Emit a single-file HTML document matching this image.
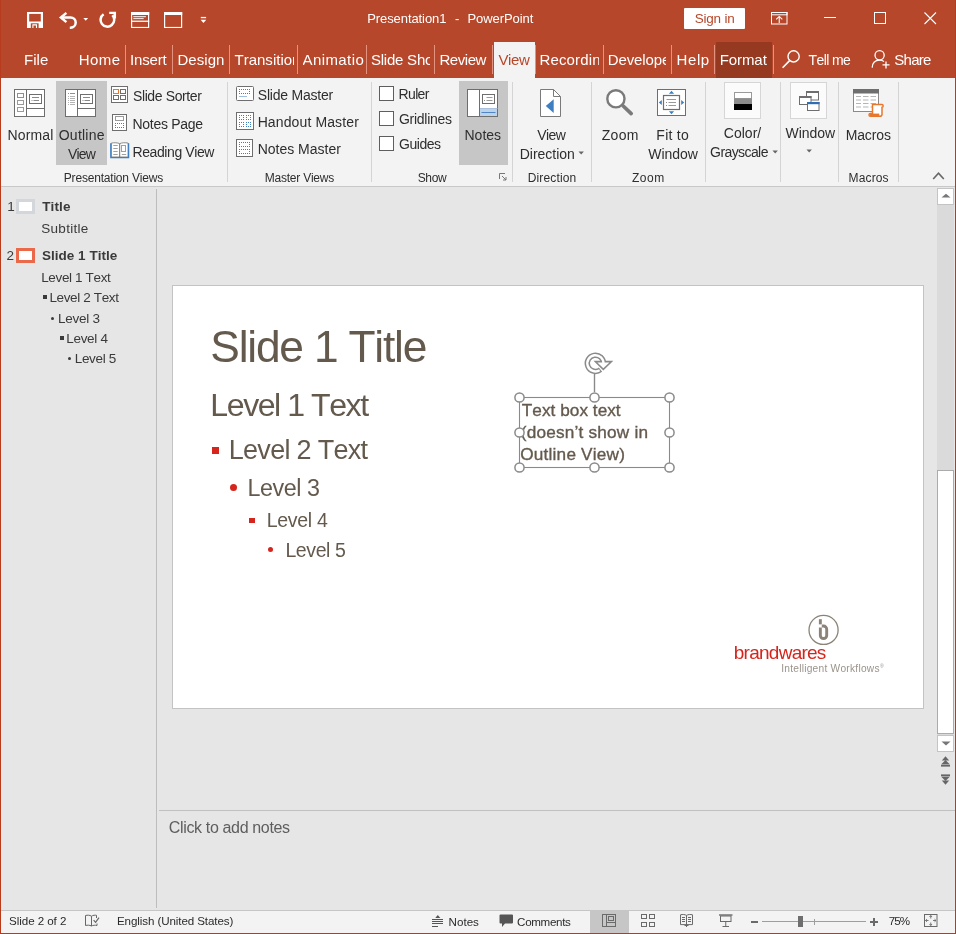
<!DOCTYPE html>
<html><head><meta charset="utf-8"><title>PowerPoint</title>
<style>
html,body{margin:0;padding:0;}
body{width:956px;height:934px;position:relative;overflow:hidden;background:#E6E6E6;font-family:"Liberation Sans",sans-serif;}
.t{position:absolute;white-space:nowrap;font-kerning:none;font-feature-settings:"kern" 0,"liga" 0;font-family:"Liberation Sans",sans-serif;}
.r{position:absolute;display:block;}
#wrap{position:absolute;left:0;top:0;width:956px;height:934px;will-change:transform;}
</style></head><body><div id="wrap">
<div class="r" style="left:0px;top:0px;width:956px;height:78px;background:#B7472A;"></div>
<div class="r" style="left:0px;top:78px;width:956px;height:108px;background:#F3F3F3;"></div>
<div class="r" style="left:0px;top:186px;width:956px;height:1px;background:#C8C8C8;"></div>
<div class="r" style="left:0px;top:187px;width:956px;height:723px;background:#E6E6E6;"></div>
<div class="r" style="left:0px;top:910px;width:956px;height:1px;background:#C6C6C6;"></div>
<div class="r" style="left:0px;top:911px;width:956px;height:23px;background:#F3F3F3;"></div>
<svg class="r" style="left:27px;top:12px;" width="16" height="16" viewBox="0 0 16 16"><rect x="0" y="0" width="16" height="16" fill="#fff"/><rect x="2.2" y="1.9" width="11.6" height="7.6" fill="#B7472A"/><rect x="3.8" y="11.3" width="7.8" height="4.7" fill="#B7472A"/><path d="M5.9 16V12.9H9.5V16" fill="none" stroke="#fff" stroke-width="1.1"/></svg>
<svg class="r" style="left:58px;top:11px;" width="22" height="18" viewBox="0 0 22 18"><path d="M8.4 1.9 L2.9 6.5 L8.4 11.1" fill="none" stroke="#fff" stroke-width="2.5" stroke-linejoin="miter"/><path d="M3.4 6.5 H12.6 A5.1 5.1 0 0 1 12.6 16.7 H11.8" fill="none" stroke="#fff" stroke-width="2.5"/></svg>
<svg class="r" style="left:83px;top:18px;" width="6" height="4" viewBox="0 0 6 4"><path d="M0.3 0h4.8L2.7 2.8z" fill="#fff"/></svg>
<svg class="r" style="left:99px;top:11px;" width="19" height="18" viewBox="0 0 19 18"><path d="M4.6 3.2 A6.8 6.8 0 1 0 13.4 4.2" fill="none" stroke="#fff" stroke-width="2.5"/><path d="M10.2 1.9 H15.9 V7.6" fill="none" stroke="#fff" stroke-width="2.3"/></svg>
<svg class="r" style="left:131px;top:12px;" width="19" height="16" viewBox="0 0 19 16"><rect x="0.6" y="0.6" width="17" height="14.9" fill="none" stroke="#fff" stroke-width="1.2"/><rect x="0" y="0" width="18.2" height="3" fill="#fff"/><rect x="0" y="8.6" width="18.2" height="1.3" fill="#fff"/><rect x="2.3" y="4.2" width="12.6" height="1" fill="#fff"/><rect x="2.3" y="6.2" width="10.4" height="0.9" fill="#fff"/></svg>
<svg class="r" style="left:164px;top:12px;" width="19" height="16" viewBox="0 0 19 16"><rect x="0.6" y="0.6" width="17" height="14.9" fill="none" stroke="#fff" stroke-width="1.2"/><rect x="0" y="0" width="18.2" height="3" fill="#fff"/></svg>
<svg class="r" style="left:200px;top:16px;" width="8" height="8" viewBox="0 0 8 8"><rect x="0.8" y="0.9" width="5.3" height="1.3" fill="#fff"/><path d="M0.6 3.8h5.7L3.45 7.1z" fill="#fff"/></svg>
<div class="t" style="left:367.23px;top:10px;font-size:13px;line-height:17px;letter-spacing:-0.085px;color:#FFFFFF;">Presentation1</div>
<div class="t" style="left:455.02px;top:10px;font-size:13px;line-height:17px;letter-spacing:1.226px;color:#FFFFFF;">-</div>
<div class="t" style="left:467.53px;top:10px;font-size:13px;line-height:17px;letter-spacing:-0.080px;color:#FFFFFF;">PowerPoint</div>
<div class="r" style="left:684px;top:8px;width:61px;height:21px;background:#FFFFFF;border-radius:1px;"></div>
<div class="t" style="left:694.69px;top:10px;font-size:13.5px;line-height:17px;letter-spacing:-0.215px;color:#B7472A;">Sign in</div>
<svg class="r" style="left:771px;top:12px;" width="17" height="13" viewBox="0 0 17 13"><rect x="0.5" y="0.5" width="15.5" height="11.5" fill="none" stroke="#fff" stroke-width="1"/><rect x="0.5" y="0.5" width="15.5" height="2.3" fill="none" stroke="#fff"/><path d="M8.25 4.6v6.4M5.2 7.4l3.05-3 3.05 3" fill="none" stroke="#fff" stroke-width="1.1"/></svg>
<div class="r" style="left:824px;top:17px;width:12px;height:1px;background:#fff;"></div>
<svg class="r" style="left:874px;top:12px;" width="13" height="13" viewBox="0 0 13 13"><rect x="0.5" y="0.5" width="11" height="11" fill="none" stroke="#fff" stroke-width="1"/></svg>
<svg class="r" style="left:924px;top:12px;" width="13" height="13" viewBox="0 0 13 13"><path d="M0.5 0.5l11.5 11.5M12 0.5L0.5 12" fill="none" stroke="#fff" stroke-width="1.1"/></svg>
<div class="r" style="left:125px;top:45px;width:1px;height:29px;background:#E3937F;"></div>
<div class="r" style="left:172px;top:45px;width:1px;height:29px;background:#E3937F;"></div>
<div class="r" style="left:229px;top:45px;width:1px;height:29px;background:#E3937F;"></div>
<div class="r" style="left:297px;top:45px;width:1px;height:29px;background:#E3937F;"></div>
<div class="r" style="left:366px;top:45px;width:1px;height:29px;background:#E3937F;"></div>
<div class="r" style="left:434px;top:45px;width:1px;height:29px;background:#E3937F;"></div>
<div class="r" style="left:603px;top:45px;width:1px;height:29px;background:#E3937F;"></div>
<div class="r" style="left:671px;top:45px;width:1px;height:29px;background:#E3937F;"></div>
<div class="r" style="left:714px;top:45px;width:1px;height:29px;background:#E3937F;"></div>
<div class="r" style="left:773px;top:45px;width:1px;height:29px;background:#E3937F;"></div>
<div class="r" style="left:492px;top:45px;width:1px;height:29px;background:#E3937F;"></div>
<div class="r" style="left:535px;top:45px;width:1px;height:29px;background:#E3937F;"></div>
<div class="r" style="left:494px;top:42px;width:41px;height:36px;background:#F3F3F3;"></div>
<div class="r" style="left:716px;top:42px;width:56px;height:36px;background:#953A21;"></div>
<div class="t" style="left:24.07px;top:50px;font-size:15px;line-height:19px;letter-spacing:0.009px;color:#FFFFFF;">File</div>
<div class="t" style="left:78.77px;top:50px;font-size:15px;line-height:19px;letter-spacing:0.428px;color:#FFFFFF;">Home</div>
<div class="t" style="left:130.12px;top:50px;font-size:15px;line-height:19px;letter-spacing:-0.184px;color:#FFFFFF;">Insert</div>
<div class="t" style="left:177.47px;top:50px;font-size:15px;line-height:19px;letter-spacing:0.043px;color:#FFFFFF;">Design</div>
<div class="t" style="left:234.46px;top:50px;font-size:15px;line-height:19px;letter-spacing:0.017px;color:#FFFFFF;width:59.5px;overflow:hidden;">Transition</div>
<div class="t" style="left:302.57px;top:50px;font-size:15px;line-height:19px;letter-spacing:0.400px;color:#FFFFFF;width:61px;overflow:hidden;">Animation</div>
<div class="t" style="left:370.92px;top:50px;font-size:15px;line-height:19px;letter-spacing:-0.222px;color:#FFFFFF;width:59.5px;overflow:hidden;">Slide Show</div>
<div class="t" style="left:439.47px;top:50px;font-size:15px;line-height:19px;letter-spacing:-0.458px;color:#FFFFFF;">Review</div>
<div class="t" style="left:498.43px;top:50px;font-size:15px;line-height:19px;letter-spacing:-0.361px;color:#B7472A;">View</div>
<div class="t" style="left:539.47px;top:50px;font-size:15px;line-height:19px;letter-spacing:0.141px;color:#FFFFFF;width:59.5px;overflow:hidden;">Recording</div>
<div class="t" style="left:607.77px;top:50px;font-size:15px;line-height:19px;letter-spacing:-0.112px;color:#FFFFFF;width:58.5px;overflow:hidden;">Developer</div>
<div class="t" style="left:676.57px;top:50px;font-size:15px;line-height:19px;letter-spacing:0.570px;color:#FFFFFF;">Help</div>
<div class="t" style="left:719.67px;top:50px;font-size:15px;line-height:19px;letter-spacing:-0.073px;color:#FFFFFF;">Format</div>
<svg class="r" style="left:781px;top:49px;" width="21" height="21" viewBox="0 0 21 21"><circle cx="12.6" cy="7.4" r="5.6" fill="none" stroke="#fff" stroke-width="1.4"/><path d="M8.6 11.6L1.6 18.8" stroke="#fff" stroke-width="1.6" fill="none"/></svg>
<div class="t" style="left:808.49px;top:51px;font-size:14px;line-height:18px;letter-spacing:-0.593px;color:#FFFFFF;">Tell me</div>
<svg class="r" style="left:871px;top:49px;" width="21" height="21" viewBox="0 0 21 21"><circle cx="8.6" cy="6.2" r="4.6" fill="none" stroke="#fff" stroke-width="1.3"/><path d="M1.2 18.6 C1.6 12.6 5 11.2 8.6 11.2 C10.6 11.2 12 11.8 13 12.6" fill="none" stroke="#fff" stroke-width="1.3"/><path d="M15 12.4v7M11.5 15.9h7" stroke="#fff" stroke-width="1.3" fill="none"/></svg>
<div class="t" style="left:894.22px;top:50px;font-size:15px;line-height:19px;letter-spacing:-0.695px;color:#FFFFFF;">Share</div>
<div class="r" style="left:227px;top:82px;width:1px;height:100px;background:#D4D4D4;"></div>
<div class="r" style="left:371px;top:82px;width:1px;height:100px;background:#D4D4D4;"></div>
<div class="r" style="left:512px;top:82px;width:1px;height:100px;background:#D4D4D4;"></div>
<div class="r" style="left:591px;top:82px;width:1px;height:100px;background:#D4D4D4;"></div>
<div class="r" style="left:705px;top:82px;width:1px;height:100px;background:#D4D4D4;"></div>
<div class="r" style="left:780px;top:82px;width:1px;height:100px;background:#D4D4D4;"></div>
<div class="r" style="left:838px;top:82px;width:1px;height:100px;background:#D4D4D4;"></div>
<div class="r" style="left:898px;top:82px;width:1px;height:100px;background:#D4D4D4;"></div>
<div class="r" style="left:56px;top:81px;width:51px;height:84px;background:#C6C6C6;"></div>
<div class="r" style="left:459px;top:81px;width:49px;height:84px;background:#C6C6C6;"></div>
<svg class="r" style="left:14px;top:89px;" width="31" height="28" viewBox="0 0 31 28"><rect x="0.5" y="0.5" width="30" height="27" fill="#fff" stroke="#6E6E6E"/><path d="M12.5 0.5v27M12.5 19.5h18" stroke="#6E6E6E" fill="none"/><rect x="15.5" y="5.5" width="12" height="9" fill="#fff" stroke="#6E6E6E"/><path d="M18 8.5h7M19.5 11.5h5.5" stroke="#8a8a8a" fill="none"/><rect x="17.5" y="11" width="1" height="1" fill="#8a8a8a"/><rect x="3.5" y="4.5" width="6" height="4" fill="#fff" stroke="#E8772E"/><rect x="3.5" y="11.5" width="6" height="4" fill="#fff" stroke="#9a9a9a"/><rect x="3.5" y="18.5" width="6" height="4" fill="#fff" stroke="#9a9a9a"/></svg>
<svg class="r" style="left:65px;top:89px;" width="31" height="28" viewBox="0 0 31 28"><rect x="0.5" y="0.5" width="30" height="27" fill="#fff" stroke="#6E6E6E"/><path d="M12.5 0.5v27M12.5 19.5h18" stroke="#6E6E6E" fill="none"/><rect x="15.5" y="5.5" width="12" height="9" fill="#fff" stroke="#6E6E6E"/><path d="M18 8.5h7M19.5 11.5h5.5" stroke="#8a8a8a" fill="none"/><rect x="17.5" y="11" width="1" height="1" fill="#8a8a8a"/><rect x="3" y="4" width="1" height="1" fill="#E8772E"/><rect x="5" y="4" width="5" height="1" fill="#E8772E"/><rect x="3" y="7" width="1" height="1" fill="#b4b4b4"/><rect x="5" y="7" width="5" height="1" fill="#b4b4b4"/><rect x="3" y="9" width="1" height="1" fill="#b4b4b4"/><rect x="5" y="9" width="5" height="1" fill="#b4b4b4"/><rect x="3" y="11" width="1" height="1" fill="#b4b4b4"/><rect x="5" y="11" width="5" height="1" fill="#b4b4b4"/><rect x="3" y="13" width="1" height="1" fill="#b4b4b4"/><rect x="5" y="13" width="5" height="1" fill="#b4b4b4"/><rect x="3" y="15" width="1" height="1" fill="#b4b4b4"/><rect x="5" y="15" width="5" height="1" fill="#b4b4b4"/></svg>
<div class="t" style="left:7.55px;top:126px;font-size:14px;line-height:18px;letter-spacing:0.134px;color:#2E2E2E;">Normal</div>
<div class="t" style="left:58.74px;top:126px;font-size:14px;line-height:18px;letter-spacing:0.238px;color:#2E2E2E;">Outline</div>
<div class="t" style="left:67.94px;top:145px;font-size:14px;line-height:18px;letter-spacing:-0.806px;color:#2E2E2E;">View</div>
<svg class="r" style="left:111px;top:86px;" width="17" height="17" viewBox="0 0 17 17"><rect x="0.5" y="0.5" width="16" height="16" fill="#fff" stroke="#6E6E6E"/><rect x="2.5" y="3.5" width="5" height="4" fill="#fff" stroke="#E8772E"/><rect x="9.5" y="3.5" width="5" height="4" fill="#fff" stroke="#6E6E6E"/><rect x="2.5" y="9.5" width="5" height="4" fill="#fff" stroke="#6E6E6E"/><rect x="9.5" y="9.5" width="5" height="4" fill="#fff" stroke="#6E6E6E"/></svg>
<svg class="r" style="left:112px;top:114px;" width="15" height="17" viewBox="0 0 15 17"><rect x="0.5" y="0.5" width="14" height="16" fill="#fff" stroke="#6E6E6E"/><rect x="3.5" y="2.5" width="8" height="4" fill="#fff" stroke="#9a9a9a"/><rect x="3" y="9" width="1" height="1" fill="#3F7FC1"/><rect x="3" y="11" width="1" height="1" fill="#3F7FC1"/><rect x="3" y="13" width="1" height="1" fill="#3F7FC1"/><rect x="5" y="9" width="1" height="1" fill="#3F7FC1"/><rect x="5" y="13" width="1" height="1" fill="#3F7FC1"/><rect x="7" y="9" width="1" height="1" fill="#3F7FC1"/><rect x="7" y="13" width="1" height="1" fill="#3F7FC1"/><rect x="9" y="9" width="1" height="1" fill="#3F7FC1"/><rect x="9" y="13" width="1" height="1" fill="#3F7FC1"/><rect x="11" y="9" width="1" height="1" fill="#3F7FC1"/><rect x="11" y="11" width="1" height="1" fill="#3F7FC1"/><rect x="11" y="13" width="1" height="1" fill="#3F7FC1"/></svg>
<svg class="r" style="left:110px;top:142px;" width="20" height="17" viewBox="0 0 20 17"><path d="M1.3 1.1 C4 0.5 7.8 0.6 9.7 1.7 C11.6 0.6 15.4 0.5 18.1 1.1 V15 H1.3z" fill="#fff" stroke="#8a8a8a"/><path d="M0.8 1.2V15.7H18.6V1.2" fill="none" stroke="#3F7FC1" stroke-width="1.3"/><path d="M9.7 1.7v13.6" stroke="#6E6E6E" fill="none"/><path d="M3.3 3.5h4.4M3.3 6.5h4.4M3.3 9.5h4.4M3.3 12.5h4.4M11.8 12.5h4.4" stroke="#a0a0a0" fill="none"/><rect x="11.5" y="3.5" width="4" height="6" fill="#fff" stroke="#a0a0a0"/></svg>
<div class="t" style="left:132.96px;top:87px;font-size:14px;line-height:18px;letter-spacing:-0.380px;color:#2E2E2E;">Slide Sorter</div>
<div class="t" style="left:132.45px;top:115px;font-size:14px;line-height:18px;letter-spacing:-0.276px;color:#2E2E2E;">Notes Page</div>
<div class="t" style="left:132.45px;top:143px;font-size:14px;line-height:18px;letter-spacing:-0.397px;color:#2E2E2E;">Reading View</div>
<div class="t" style="left:63.82px;top:170px;font-size:12px;line-height:16px;letter-spacing:-0.200px;color:#2E2E2E;">Presentation Views</div>
<svg class="r" style="left:236px;top:86px;" width="18" height="15" viewBox="0 0 18 15"><rect x="0.5" y="0.5" width="17" height="14" rx="1" fill="#fff" stroke="#6E6E6E"/><rect x="3" y="3" width="1" height="1" fill="#3F7FC1"/><rect x="3" y="5" width="1" height="1" fill="#3F7FC1"/><rect x="3" y="7" width="1" height="1" fill="#3F7FC1"/><rect x="5" y="3" width="1" height="1" fill="#3F7FC1"/><rect x="5" y="7" width="1" height="1" fill="#3F7FC1"/><rect x="7" y="3" width="1" height="1" fill="#3F7FC1"/><rect x="7" y="7" width="1" height="1" fill="#3F7FC1"/><rect x="9" y="3" width="1" height="1" fill="#3F7FC1"/><rect x="9" y="7" width="1" height="1" fill="#3F7FC1"/><rect x="11" y="3" width="1" height="1" fill="#3F7FC1"/><rect x="11" y="7" width="1" height="1" fill="#3F7FC1"/><rect x="13" y="3" width="1" height="1" fill="#3F7FC1"/><rect x="13" y="5" width="1" height="1" fill="#3F7FC1"/><rect x="13" y="7" width="1" height="1" fill="#3F7FC1"/><rect x="3" y="10" width="8" height="1" fill="#9DBCE0"/></svg>
<svg class="r" style="left:236px;top:112px;" width="18" height="18" viewBox="0 0 18 18"><rect x="0.5" y="0.5" width="17" height="17" fill="#fff" stroke="#6E6E6E"/><rect x="3" y="3" width="1" height="1" fill="#3F7FC1"/><rect x="3" y="5" width="1" height="1" fill="#3F7FC1"/><rect x="3" y="7" width="1" height="1" fill="#3F7FC1"/><rect x="5" y="3" width="1" height="1" fill="#3F7FC1"/><rect x="5" y="7" width="1" height="1" fill="#3F7FC1"/><rect x="7" y="3" width="1" height="1" fill="#3F7FC1"/><rect x="7" y="5" width="1" height="1" fill="#3F7FC1"/><rect x="7" y="7" width="1" height="1" fill="#3F7FC1"/><rect x="10" y="3" width="1" height="1" fill="#3F7FC1"/><rect x="10" y="5" width="1" height="1" fill="#3F7FC1"/><rect x="10" y="7" width="1" height="1" fill="#3F7FC1"/><rect x="12" y="3" width="1" height="1" fill="#3F7FC1"/><rect x="12" y="7" width="1" height="1" fill="#3F7FC1"/><rect x="14" y="3" width="1" height="1" fill="#3F7FC1"/><rect x="14" y="5" width="1" height="1" fill="#3F7FC1"/><rect x="14" y="7" width="1" height="1" fill="#3F7FC1"/><rect x="3" y="10" width="1" height="1" fill="#3F7FC1"/><rect x="3" y="12" width="1" height="1" fill="#3F7FC1"/><rect x="3" y="14" width="1" height="1" fill="#3F7FC1"/><rect x="5" y="10" width="1" height="1" fill="#3F7FC1"/><rect x="5" y="14" width="1" height="1" fill="#3F7FC1"/><rect x="7" y="10" width="1" height="1" fill="#3F7FC1"/><rect x="7" y="12" width="1" height="1" fill="#3F7FC1"/><rect x="7" y="14" width="1" height="1" fill="#3F7FC1"/><rect x="10" y="10" width="1" height="1" fill="#3F7FC1"/><rect x="10" y="12" width="1" height="1" fill="#3F7FC1"/><rect x="10" y="14" width="1" height="1" fill="#3F7FC1"/><rect x="12" y="10" width="1" height="1" fill="#3F7FC1"/><rect x="12" y="14" width="1" height="1" fill="#3F7FC1"/><rect x="14" y="10" width="1" height="1" fill="#3F7FC1"/><rect x="14" y="12" width="1" height="1" fill="#3F7FC1"/><rect x="14" y="14" width="1" height="1" fill="#3F7FC1"/></svg>
<svg class="r" style="left:236px;top:139px;" width="17" height="18" viewBox="0 0 17 18"><rect x="0.5" y="0.5" width="16" height="17" fill="#fff" stroke="#6E6E6E"/><rect x="3" y="3" width="1" height="1" fill="#3F7FC1"/><rect x="3" y="5" width="1" height="1" fill="#3F7FC1"/><rect x="3" y="7" width="1" height="1" fill="#3F7FC1"/><rect x="5" y="3" width="1" height="1" fill="#3F7FC1"/><rect x="5" y="7" width="1" height="1" fill="#3F7FC1"/><rect x="7" y="3" width="1" height="1" fill="#3F7FC1"/><rect x="7" y="7" width="1" height="1" fill="#3F7FC1"/><rect x="9" y="3" width="1" height="1" fill="#3F7FC1"/><rect x="9" y="7" width="1" height="1" fill="#3F7FC1"/><rect x="11" y="3" width="1" height="1" fill="#3F7FC1"/><rect x="11" y="7" width="1" height="1" fill="#3F7FC1"/><rect x="13" y="3" width="1" height="1" fill="#3F7FC1"/><rect x="13" y="5" width="1" height="1" fill="#3F7FC1"/><rect x="13" y="7" width="1" height="1" fill="#3F7FC1"/><rect x="3" y="10" width="1" height="1" fill="#3F7FC1"/><rect x="3" y="12" width="1" height="1" fill="#3F7FC1"/><rect x="3" y="14" width="1" height="1" fill="#3F7FC1"/><rect x="5" y="10" width="1" height="1" fill="#3F7FC1"/><rect x="5" y="14" width="1" height="1" fill="#3F7FC1"/><rect x="7" y="10" width="1" height="1" fill="#3F7FC1"/><rect x="7" y="14" width="1" height="1" fill="#3F7FC1"/><rect x="9" y="10" width="1" height="1" fill="#3F7FC1"/><rect x="9" y="14" width="1" height="1" fill="#3F7FC1"/><rect x="11" y="10" width="1" height="1" fill="#3F7FC1"/><rect x="11" y="14" width="1" height="1" fill="#3F7FC1"/><rect x="13" y="10" width="1" height="1" fill="#3F7FC1"/><rect x="13" y="12" width="1" height="1" fill="#3F7FC1"/><rect x="13" y="14" width="1" height="1" fill="#3F7FC1"/></svg>
<div class="t" style="left:257.86px;top:86px;font-size:14px;line-height:18px;letter-spacing:-0.231px;color:#2E2E2E;">Slide Master</div>
<div class="t" style="left:257.65px;top:113px;font-size:14px;line-height:18px;letter-spacing:0.121px;color:#2E2E2E;">Handout Master</div>
<div class="t" style="left:257.65px;top:140px;font-size:14px;line-height:18px;letter-spacing:0.003px;color:#2E2E2E;">Notes Master</div>
<div class="t" style="left:264.72px;top:170px;font-size:12px;line-height:16px;letter-spacing:-0.227px;color:#2E2E2E;">Master Views</div>
<div class="r" style="left:379px;top:86px;width:13px;height:13px;background:#fff;border:1px solid #5E5E5E;"></div>
<div class="r" style="left:379px;top:111px;width:13px;height:13px;background:#fff;border:1px solid #5E5E5E;"></div>
<div class="r" style="left:379px;top:136px;width:13px;height:13px;background:#fff;border:1px solid #5E5E5E;"></div>
<div class="t" style="left:398.55px;top:85px;font-size:14px;line-height:18px;letter-spacing:-0.644px;color:#2E2E2E;">Ruler</div>
<div class="t" style="left:399.00px;top:110px;font-size:14px;line-height:18px;letter-spacing:-0.279px;color:#2E2E2E;">Gridlines</div>
<div class="t" style="left:399.00px;top:135px;font-size:14px;line-height:18px;letter-spacing:-0.470px;color:#2E2E2E;">Guides</div>
<svg class="r" style="left:467px;top:89px;" width="32" height="28" viewBox="0 0 32 28"><rect x="0.5" y="0.5" width="30" height="27" fill="#fff"/><rect x="13" y="19.5" width="17.5" height="8" fill="#BDD3EC"/><path d="M14.5 23.5h14" stroke="#4F86C6" fill="none"/><rect x="0.5" y="0.5" width="30" height="27" fill="none" stroke="#6E6E6E"/><path d="M12.5 0.5v27" stroke="#6E6E6E" fill="none"/><path d="M13 19.5h17.5" stroke="#A9C1DD" fill="none"/><rect x="15.5" y="5.5" width="12" height="9" fill="#fff" stroke="#6E6E6E"/><path d="M19.5 8.5h6M19.5 11.5h6" stroke="#9a9a9a" fill="none"/><rect x="17" y="11" width="1" height="1" fill="#8a8a8a"/></svg>
<div class="t" style="left:464.45px;top:126px;font-size:14px;line-height:18px;letter-spacing:0.021px;color:#2E2E2E;">Notes</div>
<div class="t" style="left:417.66px;top:170px;font-size:12px;line-height:16px;letter-spacing:-0.301px;color:#2E2E2E;">Show</div>
<svg class="r" style="left:499px;top:173px;" width="8" height="8" viewBox="0 0 8 8"><path d="M0.5 6V0.5H6" fill="none" stroke="#777"/><path d="M3 3l4 4M7 4v3H4" fill="none" stroke="#777"/></svg>
<svg class="r" style="left:540px;top:89px;" width="22" height="29" viewBox="0 0 22 29"><path d="M0.5 0.5H13.5L20.5 7.5V27.5H0.5z" fill="#fff" stroke="#7a7a7a"/><path d="M13.5 0.5V7.5H20.5" fill="none" stroke="#7a7a7a"/><path d="M13.7 10.3V24L5.8 17.1z" fill="#3F7FC1"/></svg>
<div class="t" style="left:537.34px;top:126px;font-size:14px;line-height:18px;letter-spacing:-0.639px;color:#2E2E2E;">View</div>
<div class="t" style="left:519.75px;top:145px;font-size:14px;line-height:18px;letter-spacing:-0.023px;color:#2E2E2E;">Direction</div>
<svg class="r" style="left:578px;top:151px;" width="7" height="4" viewBox="0 0 7 4"><path d="M0.5 0.5h5.4L3.2 3.4z" fill="#666"/></svg>
<div class="t" style="left:527.72px;top:170px;font-size:12px;line-height:16px;letter-spacing:0.152px;color:#2E2E2E;">Direction</div>
<svg class="r" style="left:605px;top:88px;" width="30" height="30" viewBox="0 0 30 30"><circle cx="10.9" cy="10.8" r="8.6" fill="#fff" stroke="#7a7a7a" stroke-width="2.4"/><path d="M18.2 18L26.2 25.6" stroke="#7a7a7a" stroke-width="3.7" stroke-linecap="round" fill="none"/></svg>
<div class="t" style="left:601.76px;top:126px;font-size:14px;line-height:18px;letter-spacing:0.294px;color:#2E2E2E;">Zoom</div>
<svg class="r" style="left:657px;top:89px;" width="30" height="28" viewBox="0 0 30 28"><rect x="0.5" y="0.5" width="28" height="26" fill="#fff" stroke="#6E6E6E"/><rect x="6.5" y="6.5" width="16" height="14" fill="#fff" stroke="#6E6E6E" stroke-width="1.2"/><path d="M9.5 10.5h9.5M11.5 13.5h7.5M11.5 16.5h7.5" stroke="#999" fill="none"/><rect x="9" y="13" width="1" height="1" fill="#888"/><rect x="9" y="16" width="1" height="1" fill="#888"/><path d="M14.5 1.8l2.6 3h-5.2zM14.5 25.2l2.6-3h-5.2zM1.8 13.5l3-2.6v5.2zM27.2 13.5l-3-2.6v5.2z" fill="#3F7FC1"/></svg>
<div class="t" style="left:656.35px;top:126px;font-size:14px;line-height:18px;letter-spacing:0.264px;color:#2E2E2E;">Fit to</div>
<div class="t" style="left:648.34px;top:145px;font-size:14px;line-height:18px;letter-spacing:-0.053px;color:#2E2E2E;">Window</div>
<div class="t" style="left:631.92px;top:170px;font-size:12px;line-height:16px;letter-spacing:0.533px;color:#2E2E2E;">Zoom</div>
<div class="r" style="left:724px;top:82px;width:35px;height:35px;background:#FBFBFB;border:1px solid #D6D6D6;"></div>
<svg class="r" style="left:734px;top:92px;" width="18" height="18" viewBox="0 0 18 18"><rect x="0.5" y="0.5" width="17" height="6" fill="#fff" stroke="#9a9a9a"/><rect x="0" y="6.5" width="18" height="5.5" fill="#8C8C8C"/><rect x="0" y="12" width="18" height="6" fill="#000"/></svg>
<div class="t" style="left:723.79px;top:124px;font-size:14px;line-height:18px;letter-spacing:0.013px;color:#2E2E2E;">Color/</div>
<div class="t" style="left:710.10px;top:143px;font-size:14px;line-height:18px;letter-spacing:-0.587px;color:#2E2E2E;">Grayscale</div>
<svg class="r" style="left:772px;top:150px;" width="7" height="4" viewBox="0 0 7 4"><path d="M0.5 0.5h5.4L3.2 3.4z" fill="#666"/></svg>
<div class="r" style="left:790px;top:82px;width:35px;height:35px;background:#FBFBFB;border:1px solid #D6D6D6;"></div>
<svg class="r" style="left:798px;top:91px;" width="23" height="21" viewBox="0 0 23 21"><rect x="8.5" y="0.5" width="12" height="8.5" fill="#fff" stroke="#6E6E6E"/><rect x="8" y="0" width="13" height="2" fill="#6E6E6E"/><rect x="1.5" y="5.5" width="11.5" height="8" fill="#fff" stroke="#6E6E6E"/><rect x="1" y="5" width="12.5" height="2" fill="#6E6E6E"/><rect x="9.5" y="11.5" width="11.5" height="8" fill="#fff" stroke="#6E6E6E"/><rect x="9" y="11" width="12.5" height="2.2" fill="#2F6DB5"/></svg>
<div class="t" style="left:785.54px;top:124px;font-size:14px;line-height:18px;letter-spacing:-0.053px;color:#2E2E2E;">Window</div>
<svg class="r" style="left:806px;top:149px;" width="7" height="4" viewBox="0 0 7 4"><path d="M0.5 0.5h5.4L3.2 3.4z" fill="#666"/></svg>
<svg class="r" style="left:853px;top:89px;" width="32" height="29" viewBox="0 0 32 29"><rect x="0.5" y="0.5" width="25" height="22" fill="#fff" stroke="#8a8a8a"/><rect x="0" y="0" width="26" height="4.5" fill="#6E6E6E"/><path d="M3 7.5h5M10 7.5h5.5M17.5 7.5h5.5" stroke="#b5b5b5" fill="none"/><path d="M3 11h5M10 11h5.5M17.5 11h5.5" stroke="#b5b5b5" fill="none"/><path d="M3 14.5h5M10 14.5h5.5M17.5 14.5h5.5" stroke="#b5b5b5" fill="none"/><path d="M3 18h5M10 18h5.5M17.5 18h5.5" stroke="#b5b5b5" fill="none"/><path d="M19.5 15.5H29 C30.5 15.5 30.5 18.3 29 18.3 V25.5 C29 27 27.5 27.3 26.5 27.3 H17.3 C15.6 27.3 15.6 24.6 17.3 24.6 H19.5z" fill="#fff" stroke="#E8772E" stroke-width="1.5"/><path d="M16.8 25.9h9.5" stroke="#E8772E" stroke-width="2.6" fill="none"/></svg>
<div class="t" style="left:845.65px;top:126px;font-size:14px;line-height:18px;letter-spacing:-0.128px;color:#2E2E2E;">Macros</div>
<div class="t" style="left:848.62px;top:170px;font-size:12px;line-height:16px;letter-spacing:0.116px;color:#2E2E2E;">Macros</div>
<svg class="r" style="left:932px;top:171px;" width="13" height="9" viewBox="0 0 13 9"><path d="M1.2 8L6.5 2.2L11.8 8" fill="none" stroke="#666" stroke-width="1.6"/></svg>
<div class="r" style="left:156px;top:189px;width:1px;height:719px;background:#BDBDBD;"></div>
<div class="t" style="left:7.27px;top:198px;font-size:13.5px;line-height:17px;letter-spacing:-1.621px;color:#3A3A3A;">1</div>
<div class="t" style="left:6.62px;top:247px;font-size:13.5px;line-height:17px;letter-spacing:-0.350px;color:#3A3A3A;">2</div>
<div class="r" style="left:16px;top:199px;width:19px;height:15px;background:#fff;box-sizing:border-box;border:3px solid #D3D7DB;"></div>
<div class="r" style="left:16px;top:248px;width:19px;height:15px;background:#fff;box-sizing:border-box;border:3px solid #E9694A;"></div>
<div class="t" style="left:42.15px;top:198px;font-size:13.5px;line-height:17px;letter-spacing:0.140px;color:#3A3A3A;font-weight:bold;">Title</div>
<div class="t" style="left:41.29px;top:220px;font-size:13.5px;line-height:17px;letter-spacing:0.283px;color:#3A3A3A;">Subtitle</div>
<div class="t" style="left:41.91px;top:247px;font-size:13.5px;line-height:17px;letter-spacing:0.027px;color:#3A3A3A;font-weight:bold;">Slide 1 Title</div>
<div class="t" style="left:41.19px;top:269px;font-size:13.5px;line-height:17px;letter-spacing:-0.357px;color:#3A3A3A;">Level 1 Text</div>
<div class="r" style="left:43px;top:295px;width:4px;height:4px;background:#3A3A3A;"></div>
<div class="t" style="left:49.49px;top:289px;font-size:13.5px;line-height:17px;letter-spacing:-0.376px;color:#3A3A3A;">Level 2 Text</div>
<div class="r" style="left:51px;top:317px;width:3px;height:3px;background:#3A3A3A;border-radius:1.5px;"></div>
<div class="t" style="left:58.09px;top:310px;font-size:13.5px;line-height:17px;letter-spacing:-0.255px;color:#3A3A3A;">Level 3</div>
<div class="r" style="left:60px;top:336px;width:4px;height:4px;background:#3A3A3A;"></div>
<div class="t" style="left:66.19px;top:330px;font-size:13.5px;line-height:17px;letter-spacing:-0.288px;color:#3A3A3A;">Level 4</div>
<div class="r" style="left:67.5px;top:357px;width:3px;height:3px;background:#3A3A3A;border-radius:1.5px;"></div>
<div class="t" style="left:74.69px;top:350px;font-size:13.5px;line-height:17px;letter-spacing:-0.310px;color:#3A3A3A;">Level 5</div>
<div class="r" style="left:172px;top:285px;width:752px;height:424px;background:#FFFFFF;box-sizing:border-box;border:1px solid #C3C3C3;"></div>
<div class="t" style="left:210.29px;top:321px;font-size:44.3px;line-height:51px;letter-spacing:-1.198px;color:#63594D;">Slide 1 Title</div>
<div class="t" style="left:210.37px;top:386px;font-size:32.1px;line-height:38px;letter-spacing:-1.454px;color:#63594D;">Level 1 Text</div>
<div class="r" style="left:212.4px;top:447.2px;width:7.1px;height:7.1px;background:#D5251C;"></div>
<div class="t" style="left:228.69px;top:434px;font-size:27px;line-height:32px;letter-spacing:-0.697px;color:#63594D;">Level 2 Text</div>
<div class="r" style="left:229.9px;top:483.5px;width:7.2px;height:7.2px;background:#D5251C;border-radius:50%;"></div>
<div class="t" style="left:247.39px;top:474px;font-size:23.3px;line-height:28px;letter-spacing:-0.416px;color:#63594D;">Level 3</div>
<div class="r" style="left:249.4px;top:517.8px;width:5.5px;height:5.5px;background:#D5251C;"></div>
<div class="t" style="left:266.80px;top:508px;font-size:19.5px;line-height:24px;letter-spacing:-0.318px;color:#63594D;">Level 4</div>
<div class="r" style="left:267.8px;top:546.7px;width:5.4px;height:5.4px;background:#D5251C;border-radius:50%;"></div>
<div class="t" style="left:285.40px;top:538px;font-size:19.5px;line-height:24px;letter-spacing:-0.394px;color:#63594D;">Level 5</div>
<div class="t" style="left:521.81px;top:399px;font-size:17.2px;line-height:22px;letter-spacing:0.037px;color:#63594D;-webkit-text-stroke:0.35px #63594D;">Text box text</div>
<div class="t" style="left:520.83px;top:421px;font-size:17.2px;line-height:22px;letter-spacing:0.200px;color:#63594D;-webkit-text-stroke:0.35px #63594D;">(doesn’t show in</div>
<div class="t" style="left:520.29px;top:443px;font-size:17.2px;line-height:22px;letter-spacing:0.200px;color:#63594D;-webkit-text-stroke:0.35px #63594D;">Outline View)</div>
<svg class="r" style="left:504px;top:344px;" width="182" height="130" viewBox="0 0 182 130"><path d="M90.5 30v18" stroke="#8A8A8A" stroke-width="1.4" fill="none"/><rect x="15.5" y="53.5" width="150" height="70" fill="none" stroke="#8A8A8A" stroke-width="1.1"/><circle cx="15.5" cy="53.5" r="4.6" fill="#fff" stroke="#8A8A8A" stroke-width="1.5"/><circle cx="15.5" cy="88.5" r="4.6" fill="#fff" stroke="#8A8A8A" stroke-width="1.5"/><circle cx="15.5" cy="123.5" r="4.6" fill="#fff" stroke="#8A8A8A" stroke-width="1.5"/><circle cx="90.5" cy="53.5" r="4.6" fill="#fff" stroke="#8A8A8A" stroke-width="1.5"/><circle cx="90.5" cy="123.5" r="4.6" fill="#fff" stroke="#8A8A8A" stroke-width="1.5"/><circle cx="165.5" cy="53.5" r="4.6" fill="#fff" stroke="#8A8A8A" stroke-width="1.5"/><circle cx="165.5" cy="88.5" r="4.6" fill="#fff" stroke="#8A8A8A" stroke-width="1.5"/><circle cx="165.5" cy="123.5" r="4.6" fill="#fff" stroke="#8A8A8A" stroke-width="1.5"/><path d="M99.47 20.0 A8.1 8.1 0 1 0 96.5 25.6" fill="none" stroke="#8A8A8A" stroke-width="5.4"/><path d="M91.5 17.6H107.3L99.3 25.4z" fill="#8A8A8A" stroke="#8A8A8A" stroke-width="1.7" stroke-linejoin="miter"/><path d="M99.47 20.0 A8.1 8.1 0 1 0 95.69 26.17" fill="none" stroke="#fff" stroke-width="2.4"/><path d="M93.4 18.4H105.4L99.3 24.3z" fill="#fff"/></svg>
<svg class="r" style="left:807px;top:613px;" width="34" height="34" viewBox="0 0 34 34"><circle cx="16.56" cy="16.9" r="14.55" fill="#fff" stroke="#8B8378" stroke-width="1.3"/><rect x="11.9" y="6.2" width="2.9" height="5.15" fill="#8B8378"/><path d="M13.35 14.6V22.4A3.17 3.17 0 0 0 19.7 22.4V16.2A3.17 3.17 0 0 0 16.5 13.05H14.8" fill="none" stroke="#8B8378" stroke-width="2.9"/></svg>
<div class="t" style="left:733.78px;top:641px;font-size:19px;line-height:23px;letter-spacing:-0.741px;color:#D5251C;">brandwares</div>
<div class="t" style="left:781.16px;top:662px;font-size:10.2px;line-height:13px;letter-spacing:0.249px;color:#9A938B;">Intelligent Workflows</div>
<div class="t" style="left:879.92px;top:662px;font-size:5px;line-height:8px;letter-spacing:0.470px;color:#9A938B;">®</div>
<div class="r" style="left:937px;top:188px;width:17px;height:564px;background:#DADADA;"></div>
<div class="r" style="left:937px;top:188px;width:17px;height:17px;background:#fff;box-sizing:border-box;border:1px solid #C4C4C4;"></div>
<svg class="r" style="left:941px;top:193px;" width="10" height="5" viewBox="0 0 10 5"><path d="M0.5 4.6h9L5 0.8z" fill="#777"/></svg>
<div class="r" style="left:937px;top:470px;width:17px;height:264px;background:#fff;box-sizing:border-box;border:1px solid #ABABAB;"></div>
<div class="r" style="left:937px;top:735px;width:17px;height:17px;background:#fff;box-sizing:border-box;border:1px solid #C4C4C4;"></div>
<svg class="r" style="left:941px;top:741px;" width="10" height="5" viewBox="0 0 10 5"><path d="M0.5 0.4h9L5 4.4z" fill="#777"/></svg>
<svg class="r" style="left:940px;top:756px;" width="11" height="11" viewBox="0 0 11 11"><path d="M5.5 0.3L9.2 4.4H1.8z" fill="#666"/><path d="M5.5 4L10 8.6H1z" fill="#666"/><rect x="1" y="9" width="9" height="1.6" fill="#666"/></svg>
<svg class="r" style="left:940px;top:774px;" width="11" height="11" viewBox="0 0 11 11"><rect x="1" y="0.4" width="9" height="1.6" fill="#666"/><path d="M1 2.4H10L5.5 7z" fill="#666"/><path d="M1.8 6.6H9.2L5.5 10.7z" fill="#666"/></svg>
<div class="r" style="left:159px;top:810px;width:796px;height:1px;background:#C0C0C0;"></div>
<div class="t" style="left:168.79px;top:818px;font-size:16px;line-height:19px;letter-spacing:-0.346px;color:#5E5E5E;">Click to add notes</div>
<div class="t" style="left:9.07px;top:914px;font-size:11.6px;line-height:14px;letter-spacing:-0.066px;color:#2B2B2B;">Slide 2 of 2</div>
<svg class="r" style="left:85px;top:914px;" width="15" height="14" viewBox="0 0 15 14"><path d="M0.5 1.5C2.5 1 4.5 1 6.5 2.2V12C4.5 11 2.5 11 0.5 11.5zM6.5 2.2C8 1.2 10 1 11.5 1.3V4" fill="none" stroke="#666"/><path d="M6.5 12C8 11.2 10 11 12 11.5V9.5" fill="none" stroke="#666"/><path d="M8.6 6.2l2 2.2L14 3.6" fill="none" stroke="#666" stroke-width="1.2"/></svg>
<div class="t" style="left:116.95px;top:914px;font-size:11.6px;line-height:14px;letter-spacing:-0.098px;color:#2B2B2B;">English (United States)</div>
<svg class="r" style="left:431px;top:914px;" width="13" height="14" viewBox="0 0 13 14"><path d="M6.8 1L9.3 4H4.3z" fill="#555"/><path d="M1 5.5h11M1 7.5h11M1 9.5h11M1 12.5h6" stroke="#555" fill="none"/></svg>
<div class="t" style="left:448.55px;top:915px;font-size:11.6px;line-height:14px;letter-spacing:0.017px;color:#2B2B2B;">Notes</div>
<svg class="r" style="left:499px;top:914px;" width="15" height="14" viewBox="0 0 15 14"><path d="M1.5 0.5H13A1 1 0 0 1 14 1.5V8.5A1 1 0 0 1 13 9.5H6L3 13V9.5H1.5A1 1 0 0 1 0.5 8.5V1.5A1 1 0 0 1 1.5 0.5z" fill="#555"/></svg>
<div class="t" style="left:517.11px;top:915px;font-size:11.6px;line-height:14px;letter-spacing:-0.325px;color:#2B2B2B;">Comments</div>
<div class="r" style="left:590px;top:911px;width:39px;height:22px;background:#C6C6C6;"></div>
<svg class="r" style="left:602px;top:914px;" width="14" height="13" viewBox="0 0 14 13"><rect x="0.5" y="0.5" width="13" height="12" fill="none" stroke="#6A6A6A"/><path d="M4.5 0.5v12M4.5 8.5h9" stroke="#6A6A6A" fill="none"/><rect x="6.5" y="2.5" width="5" height="4" fill="none" stroke="#6A6A6A"/></svg>
<svg class="r" style="left:641px;top:914px;" width="15" height="13" viewBox="0 0 15 13"><rect x="0.5" y="0.5" width="5" height="4" fill="none" stroke="#6A6A6A"/><rect x="8.5" y="0.5" width="5" height="4" fill="none" stroke="#6A6A6A"/><rect x="0.5" y="8.5" width="5" height="4" fill="none" stroke="#6A6A6A"/><rect x="8.5" y="8.5" width="5" height="4" fill="none" stroke="#6A6A6A"/></svg>
<svg class="r" style="left:680px;top:914px;" width="14" height="14" viewBox="0 0 14 14"><path d="M0.5 0.8C2.5 0.2 5 0.4 6.5 1.4C8 0.4 10.5 0.2 12.5 0.8V10.6H0.5z" fill="none" stroke="#6A6A6A"/><path d="M6.5 1.4V13" stroke="#6A6A6A" fill="none"/><path d="M2 3.5h3M2 5.5h3M2 7.5h3M8 3.5h3M8 5.5h3M8 7.5h3" stroke="#6A6A6A" fill="none"/><path d="M4.5 11.5h4" stroke="#6A6A6A" fill="none"/></svg>
<svg class="r" style="left:719px;top:914px;" width="14" height="14" viewBox="0 0 14 14"><path d="M0 1h13.5" stroke="#6A6A6A" stroke-width="1.4" fill="none"/><rect x="1.5" y="2" width="10.5" height="5.5" fill="none" stroke="#6A6A6A"/><path d="M6.75 7.5v4.5M3.5 12.5h6.5" stroke="#6A6A6A" fill="none"/></svg>
<div class="r" style="left:751px;top:921px;width:7px;height:2px;background:#6A6A6A;"></div>
<div class="r" style="left:762px;top:921px;width:104px;height:1px;background:#9E9E9E;"></div>
<div class="r" style="left:814px;top:919px;width:1px;height:6px;background:#9E9E9E;"></div>
<div class="r" style="left:798px;top:916px;width:5px;height:11px;background:#6E6E6E;"></div>
<div class="r" style="left:870px;top:921px;width:8px;height:2px;background:#6A6A6A;"></div>
<div class="r" style="left:873px;top:918px;width:2px;height:8px;background:#6A6A6A;"></div>
<div class="t" style="left:888.81px;top:914px;font-size:11.6px;line-height:14px;letter-spacing:-1.004px;color:#2B2B2B;">75%</div>
<svg class="r" style="left:924px;top:914px;" width="14" height="14" viewBox="0 0 14 14"><rect x="0.5" y="0.5" width="12.5" height="12" fill="none" stroke="#6A6A6A"/><path d="M6.75 1.5v3M5.5 3l1.25-1.5L8 3M6.75 11.5v-3M5.5 10l1.25 1.5L8 10M1.5 6.5h3M3 5.2L1.5 6.5 3 7.8M12 6.5H9M10.5 5.2L12 6.5 10.5 7.8" stroke="#6A6A6A" fill="none" stroke-width=".9"/></svg>
<div class="r" style="left:0px;top:0px;width:1px;height:934px;background:#B83B1E;"></div>
<div class="r" style="left:955px;top:0px;width:1px;height:934px;background:#B83B1E;"></div>
<div class="r" style="left:0px;top:933px;width:956px;height:1px;background:#B83B1E;"></div>
</div></body></html>
